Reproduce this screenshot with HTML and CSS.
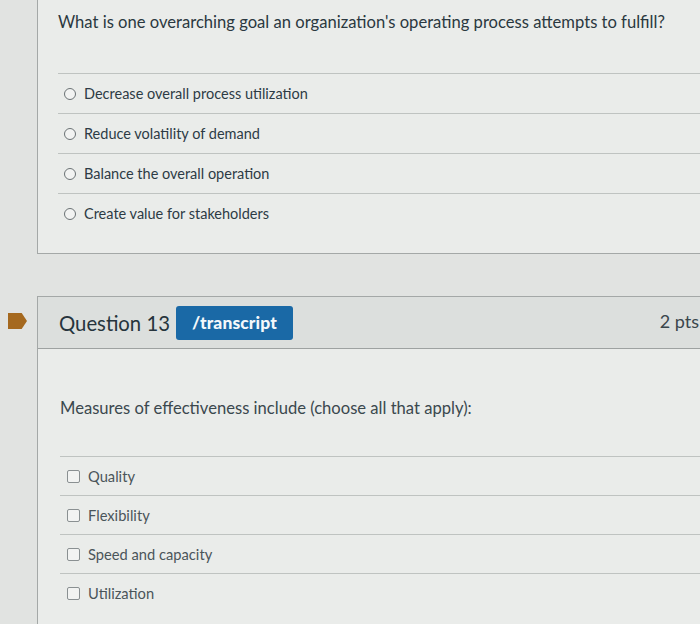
FILE: index.html
```html
<!DOCTYPE html>
<html lang="en">
<head>
<meta charset="utf-8">
<title>Quiz</title>
<link rel="stylesheet" href="styles.css">
</head>
<body>
<div class="quiz">
  <div class="qrow">
    <div class="gutter"></div>
    <section class="card card-first">
      <p class="prompt">What is one overarching goal an organization's operating process attempts to fulfill?</p>
      <ul class="answers">
        <li class="answer"><span class="radio"></span><span class="label">Decrease overall process utilization</span></li>
        <li class="answer"><span class="radio"></span><span class="label">Reduce volatility of demand</span></li>
        <li class="answer"><span class="radio"></span><span class="label">Balance the overall operation</span></li>
        <li class="answer"><span class="radio"></span><span class="label">Create value for stakeholders</span></li>
      </ul>
    </section>
  </div>
  <div class="qrow qrow-second">
    <div class="gutter"><span class="flag"></span></div>
    <section class="card">
      <header class="card-header">
        <h2 class="qtitle">Question 13</h2>
        <span class="badge">/transcript</span>
        <span class="pts">2 pts</span>
      </header>
      <div class="card-body">
        <p class="prompt prompt-body">Measures of effectiveness include (choose all that apply):</p>
        <ul class="answers answers-check">
          <li class="answer"><span class="check"></span><span class="label">Quality</span></li>
          <li class="answer"><span class="check"></span><span class="label">Flexibility</span></li>
          <li class="answer"><span class="check"></span><span class="label">Speed and capacity</span></li>
          <li class="answer"><span class="check"></span><span class="label">Utilization</span></li>
        </ul>
      </div>
    </section>
  </div>
</div>
</body>
</html>
```
FILE: styles.css
```css
html, body {
  margin: 0;
  padding: 0;
}
body {
  background: #e1e3e1;
  font-family: "Lato", "Liberation Sans", sans-serif;
  color: #2d3b45;
  overflow: hidden;
  width: 700px;
  height: 624px;
}
.quiz {
  display: flex;
  flex-direction: column;
}
.qrow {
  display: flex;
}
.qrow-second {
  margin-top: 42px;
}
.gutter {
  width: 37px;
  flex: 0 0 37px;
}
.flag {
  display: block;
  width: 19px;
  height: 16px;
  margin: 17px 0 0 8px;
  background: #a5691f;
  clip-path: polygon(0 0, 72% 0, 100% 50%, 72% 100%, 0 100%);
}
.card {
  width: 680px;
  flex: 0 0 680px;
  background: #eaecea;
  border-left: 1px solid #a4a8a7;
  border-top: 1px solid #a4a8a7;
}
.card-first {
  border-top: none;
  border-bottom: 1px solid #a4a8a7;
  padding: 10px 0 20px 20px;
}
.prompt {
  margin: 0;
  font-size: 16.6px;
  line-height: 24px;
  color: #2a3840;
}
.answers {
  list-style: none;
  margin: 39px 0 0 0;
  padding: 0;
}
.answer {
  display: flex;
  align-items: center;
  height: 39px;
  border-top: 1px solid #bfc3c1;
  padding-left: 6px;
}
.radio {
  width: 10px;
  height: 10px;
  border: 1.5px solid #6b7275;
  border-radius: 50%;
  margin-right: 8px;
  background: #f2f3f2;
}
.label {
  font-size: 14.5px;
  color: #2d3b45;
}
.card-header {
  display: flex;
  align-items: center;
  height: 51px;
  background: #dcdfdd;
  border-bottom: 1px solid #9ea2a1;
  padding: 0 19px 0 21px;
}
.qtitle {
  margin: 0;
  font-size: 20.3px;
  font-weight: 400;
  color: #26343c;
}
.badge {
  margin-left: 6px;
  width: 117px;
  height: 34px;
  background: #1a69a6;
  border-radius: 3px;
  color: #f4f8fb;
  font-weight: 900;
  font-size: 17.5px;
  display: flex;
  align-items: center;
  justify-content: center;
  letter-spacing: 0.1px;
}
.pts {
  margin-left: auto;
  font-size: 18px;
  color: #3a464c;
  margin-top: -4px;
}
.card-body {
  padding: 48px 0 30px 22px;
}
.prompt-body {
  font-size: 16.6px;
  line-height: 22px;
  color: #3b484e;
}
.answers-check {
  margin-top: 37px;
}
.answers-check .answer {
  height: 38px;
  padding-left: 7px;
}
.check {
  width: 11px;
  height: 11px;
  border: 1.5px solid #8a9092;
  border-radius: 2px;
  margin-right: 8px;
  background: #f2f3f2;
}
.answers-check .label {
  font-size: 14.7px;
  color: #4a555a;
}
```
